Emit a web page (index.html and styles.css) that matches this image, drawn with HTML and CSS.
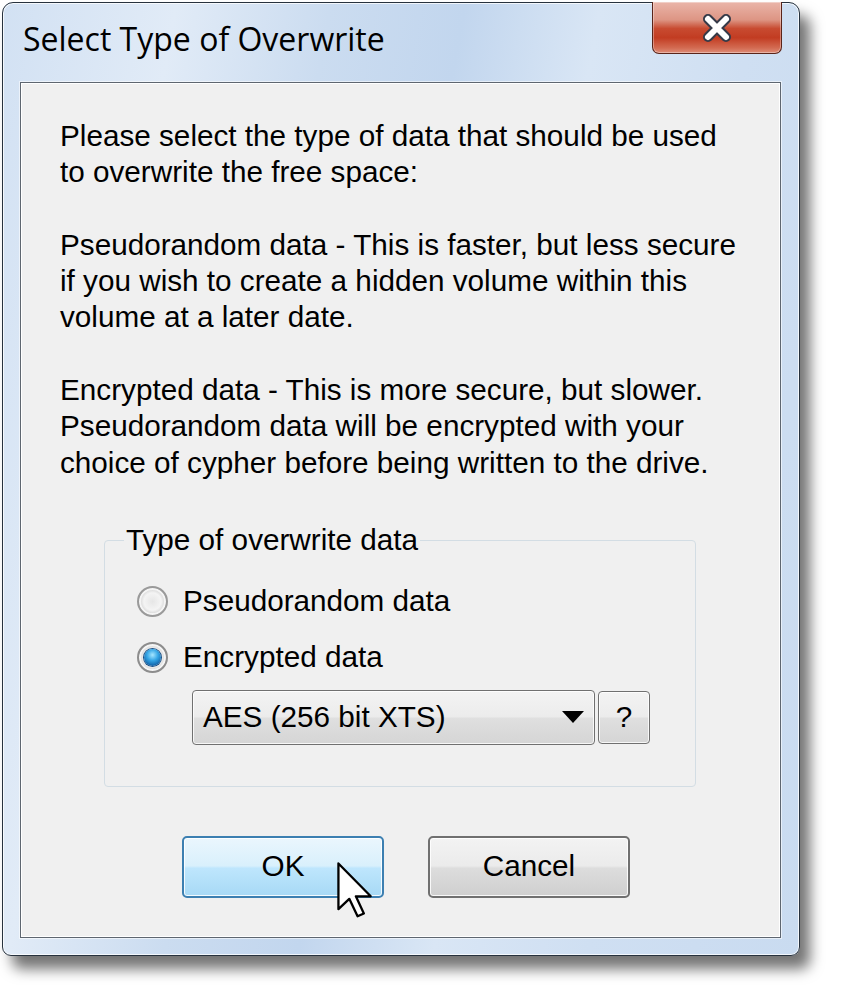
FILE: index.html
```html
<!DOCTYPE html>
<html lang="en">
<head>
<meta charset="utf-8">
<title>Select Type of Overwrite</title>
<link rel="stylesheet" href="styles.css">
</head>
<body>
<div class="window">
  <div class="titlebar">
    <div class="title">Select Type of Overwrite</div>
    <div class="close" aria-label="Close">
      <svg width="40" height="30" viewBox="0 0 40 30">
        <path d="M11 6 L29 24 M29 6 L11 24" stroke="#353a48" stroke-width="10" stroke-linecap="round" fill="none"/>
        <path d="M11 6 L29 24 M29 6 L11 24" stroke="#ffffff" stroke-width="6" stroke-linecap="round" fill="none"/>
      </svg>
    </div>
  </div>
  <div class="client">
    <div class="intro">
      <p>Please select the type of data that should be used<br>to overwrite the free space:</p>
      <p>Pseudorandom data - This is faster, but less secure<br>if you wish to create a hidden volume within this<br>volume at a later date.</p>
      <p>Encrypted data - This is more secure, but slower.<br>Pseudorandom data will be encrypted with your<br>choice of cypher before being written to the drive.</p>
    </div>
    <fieldset class="group">
      <legend>Type of overwrite data</legend>
      <div class="options">
        <div class="option">
          <span class="radio"></span>
          <span class="label">Pseudorandom data</span>
        </div>
        <div class="option">
          <span class="radio checked"><span class="dot"></span></span>
          <span class="label">Encrypted data</span>
        </div>
        <div class="combo-row">
          <div class="combo">
            <span class="combo-text">AES (256 bit XTS)</span>
            <svg class="arrow" width="22" height="12" viewBox="0 0 22 12"><path d="M0 0 H22 L11 12 Z" fill="#000"/></svg>
          </div>
          <div class="help">?</div>
        </div>
      </div>
    </fieldset>
    <div class="buttons">
      <div class="btn btn-ok">OK
        <svg class="pointer" width="36" height="56" viewBox="0 0 12.6 19.6">
          <path d="M0.5 0.5 L0.5 16.5 L4.3 12.9 L7.2 19 L9.4 18 L6.6 12 L11.8 12 Z" fill="#fff" stroke="#000" stroke-width="0.8" stroke-linejoin="round"/>
        </svg>
      </div>
      <div class="btn">Cancel</div>
    </div>
  </div>
</div>
</body>
</html>
```

FILE: styles.css
```css
* { box-sizing: border-box; }

html, body {
  margin: 0;
  background: #ffffff;
}

body {
  min-height: 1000px;
  padding: 2px 0 0 2px;
  font-family: "Liberation Sans", Arial, sans-serif;
}

.window {
  width: 798px;
  height: 954px;
  border: 1px solid #27323e;
  border-radius: 11px 11px 9px 9px;
  padding: 0 18px 17px 17px;
  background:
    linear-gradient(100deg, #d2e1f3 0%, #e1ebf7 18%, #cbdcf0 34%, #c2d6ee 48%, #d9e6f5 62%, #cfdff2 78%, #c9dbf0 100%);
  box-shadow: inset 0 0 0 1px rgba(255,255,255,0.75), 10px 13px 14px rgba(0,0,0,0.55);
  display: flex;
  flex-direction: column;
}

.titlebar {
  height: 79px;
  display: flex;
  justify-content: space-between;
  align-items: flex-start;
  flex: none;
}

.title {
  font-family: "Open Sans", "Noto Sans", sans-serif;
  font-size: 32px;
  line-height: 32px;
  padding: 20px 0 0 3px;
  color: #000;
  white-space: nowrap;
}

.close {
  width: 130px;
  height: 52px;
  margin-top: -1px;
  margin-right: -1px;
  border: 1px solid #5a2419;
  border-top: none;
  border-radius: 0 0 7px 7px;
  background: linear-gradient(180deg, #eab5a9 0%, #dd9584 35%, #c84b31 52%, #c23c22 70%, #d36b52 90%, #de8d78 100%);
  box-shadow: inset 0 0 0 1px rgba(255,255,255,0.35);
  display: flex;
  align-items: center;
  justify-content: center;
}

.client {
  height: 856px;
  background: #f0f0f0;
  border: 1px solid #5e6670;
  box-shadow: inset 0 0 0 1px #ffffff, 0 0 0 1px rgba(255,255,255,0.55);
  padding: 35px 0 0 39px;
  font-size: 29.7px;
  line-height: 36.3px;
  color: #000;
}

.intro p {
  margin: 0 0 36.3px;
  white-space: nowrap;
}

.intro p:last-child { margin-bottom: 0; }

.group {
  margin: 41px 0 0 44px;
  width: 592px;
  border: 1px solid #d3dde4;
  border-radius: 4px;
  padding: 0 0 41px 0;
  min-width: 0;
}

.group legend {
  margin-left: 19px;
  padding: 0 2px;
  line-height: 36.3px;
  white-space: nowrap;
}

.options {
  margin-top: 25px;
  padding-left: 32px;
}

.option {
  display: flex;
  align-items: center;
  height: 36.3px;
}

.option + .option { margin-top: 19.7px; }

.radio {
  width: 31px;
  height: 31px;
  border-radius: 50%;
  border: 2px solid #9a9a9a;
  background: radial-gradient(circle at 50% 50%, #e6e6e6 0%, #f4f4f4 45%, #d0d0d0 70%, #c9c9c9 100%);
  box-shadow: inset 0 0 0 2px #f5f5f5;
  flex: none;
  display: flex;
  align-items: center;
  justify-content: center;
}

.radio.checked {
  border-color: #8d8d8d;
}

.dot {
  width: 17px;
  height: 17px;
  border-radius: 50%;
  background: radial-gradient(circle at 50% 35%, #a6e6ff 0%, #35a6e6 40%, #0f5ea4 80%, #0b3e78 100%);
  box-shadow: 0 0 0 1px #1b4f84;
}

.label {
  margin-left: 15px;
  white-space: nowrap;
}

.combo-row {
  display: flex;
  align-items: flex-start;
  gap: 3px;
  margin: 14px 0 0 55px;
}

.combo {
  width: 403px;
  height: 55px;
  border: 1px solid #707070;
  border-radius: 4px;
  background: linear-gradient(180deg, #f3f3f3 0%, #ececec 48%, #dfdfdf 52%, #d5d5d5 100%);
  box-shadow: inset 0 0 0 1px rgba(255,255,255,0.8);
  display: flex;
  align-items: center;
  justify-content: space-between;
  padding: 0 10px 0 10px;
}

.combo-text { white-space: nowrap; }

.help {
  width: 52px;
  height: 53px;
  margin-top: 1px;
  border: 1px solid #707070;
  border-radius: 4px;
  background: linear-gradient(180deg, #f3f3f3 0%, #ececec 48%, #dfdfdf 52%, #d5d5d5 100%);
  box-shadow: inset 0 0 0 1px rgba(255,255,255,0.8);
  display: flex;
  align-items: center;
  justify-content: center;
}

.buttons {
  display: flex;
  gap: 44px;
  margin: 49px 0 0 122px;
}

.btn {
  position: relative;
  width: 202px;
  height: 62px;
  border: 2px solid #707070;
  border-radius: 5px;
  background: linear-gradient(180deg, #f3f3f3 0%, #ebebeb 48%, #dddddd 52%, #cfcfcf 100%);
  box-shadow: inset 0 0 0 1px rgba(255,255,255,0.85);
  display: flex;
  align-items: center;
  justify-content: center;
}

.btn-ok {
  border-color: #3c7fb1;
  background: linear-gradient(180deg, #eaf6fd 0%, #d9f0fc 48%, #bee6fd 52%, #a7d9f5 100%);
}

.pointer {
  position: absolute;
  left: 153px;
  top: 24px;
}
```
